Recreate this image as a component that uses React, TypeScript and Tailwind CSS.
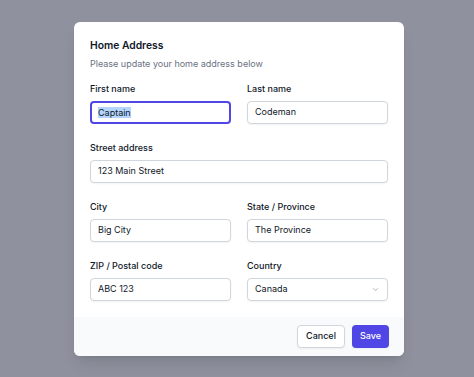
import React from 'react';

const Field = ({ label, value, focused, select }: { label: string; value: string; focused?: boolean; select?: boolean }) => (
  <div className="flex flex-col">
    <label className="text-[9px] leading-[13px] font-medium text-gray-900">{label}</label>
    {focused ? (
      <div className="mt-[6px] h-[23px] rounded-[4px] border-2 border-[#4f46e5] pl-[6px] flex items-center text-[9px] text-gray-900">
        <span className="bg-[#b4d5fe] leading-[11px]">{value}</span>
      </div>
    ) : (
      <div className="mt-[6px] h-[23px] rounded-[4px] border border-gray-300 pl-[7px] pr-[7px] flex items-center justify-between text-[9px] text-gray-900 bg-white shadow-xs">
        <span>{value}</span>
        {select && (
          <svg width="9" height="9" viewBox="0 0 20 20" fill="none" stroke="#9ca3af" strokeWidth="1.8" strokeLinecap="round" strokeLinejoin="round">
            <path d="M5.5 8l4.5 4.5L14.5 8" />
          </svg>
        )}
      </div>
    )}
  </div>
);

export default function App() {
  return (
    <div className="h-screen w-full bg-[#8f929e] flex items-center justify-center pl-[4px]" style={{ fontFamily: 'Inter, "Noto Sans", sans-serif' }}>
      <div className="w-[330px] bg-white rounded-[6px] shadow-lg overflow-hidden">
        <div className="px-4 pt-[15px] pb-4">
          <h2 className="text-[10.3px] leading-4 font-semibold text-gray-900">Home Address</h2>
          <p className="mt-1 text-[9px] leading-[14px] text-gray-500">Please update your home address below</p>
          <div className="mt-[11px] grid grid-cols-2 gap-x-4 gap-y-[17px]">
            <Field label="First name" value="Captain" focused />
            <Field label="Last name" value="Codeman" />
            <div className="col-span-2">
              <Field label="Street address" value="123 Main Street" />
            </div>
            <Field label="City" value="Big City" />
            <Field label="State / Province" value="The Province" />
            <Field label="ZIP / Postal code" value="ABC 123" />
            <Field label="Country" value="Canada" select />
          </div>
        </div>
        <div className="bg-gray-50 px-[15px] pt-2 pb-[8px] flex justify-end gap-[7px]">
          <button className="h-[23px] px-[8px] rounded-[4px] border border-gray-300 bg-white text-[9px] font-medium text-gray-900 shadow-xs">Cancel</button>
          <button className="h-[23px] px-[8px] rounded-[4px] bg-[#4f46e5] text-[9px] font-medium text-white shadow-xs">Save</button>
        </div>
      </div>
    </div>
  );
}
